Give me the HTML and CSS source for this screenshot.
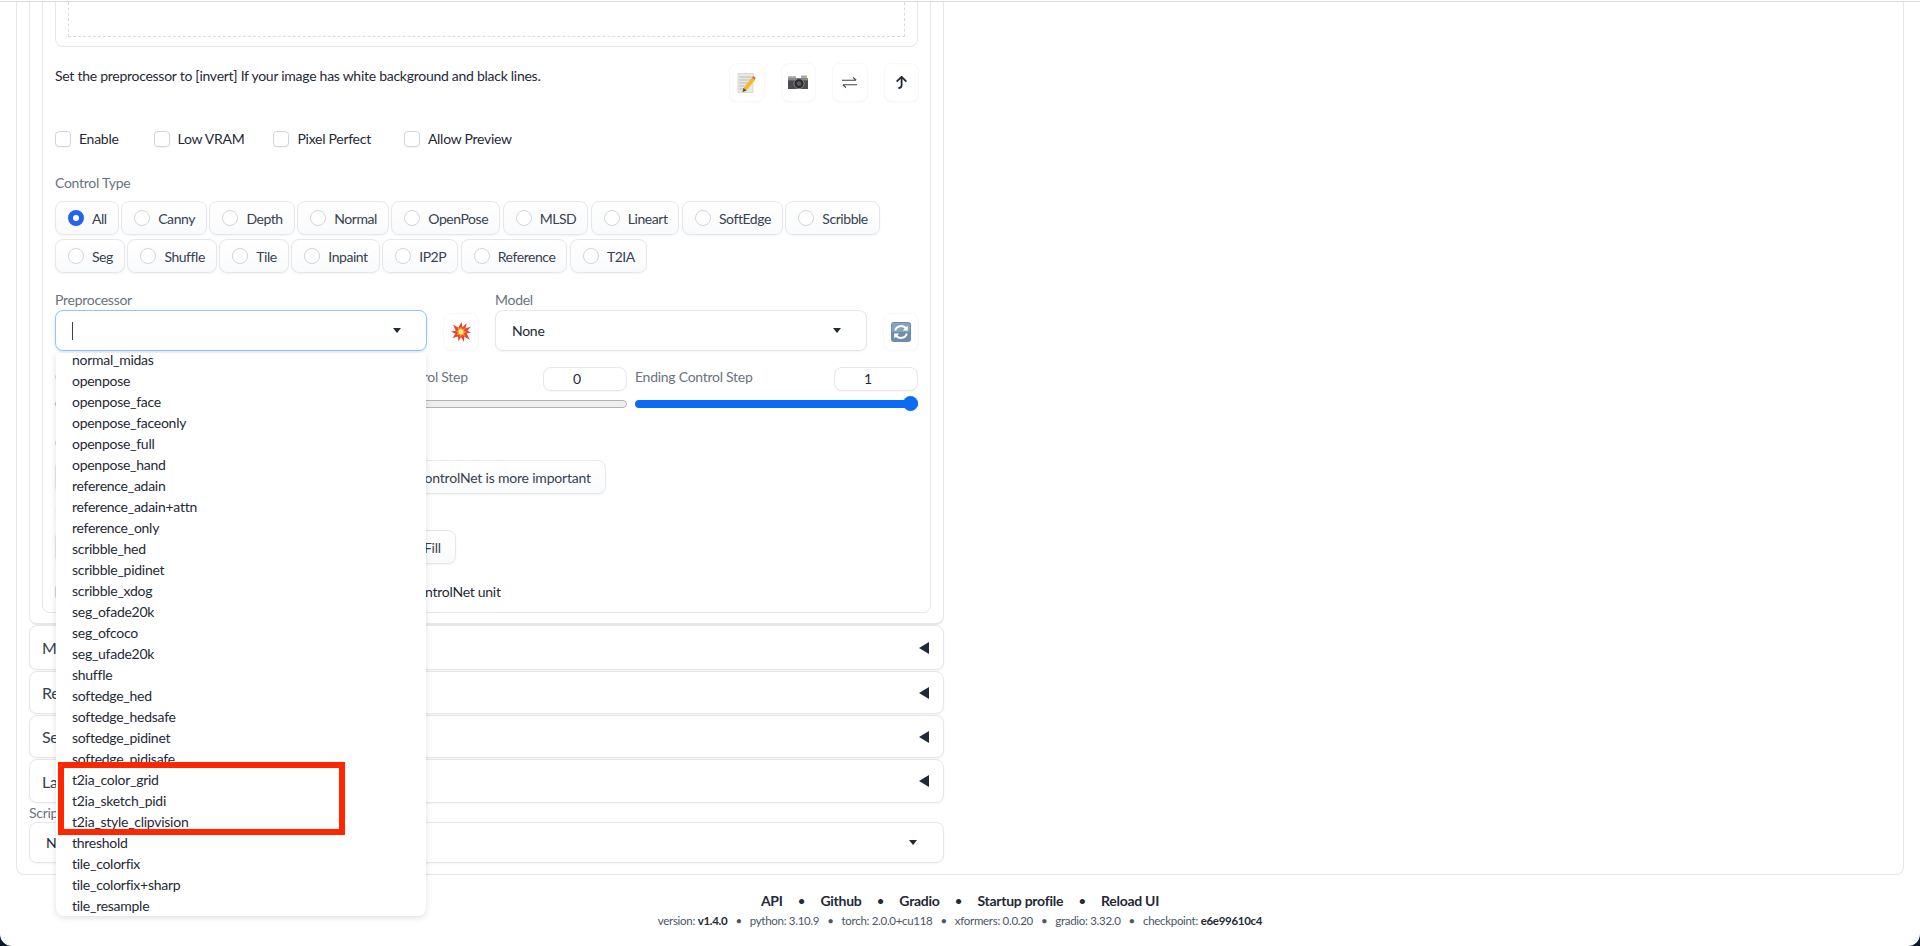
FILE: index.html
```html
<!DOCTYPE html>
<html lang="en">
<head>
<meta charset="utf-8">
<title>Stable Diffusion - ControlNet</title>
<link rel="stylesheet" href="styles.css">
</head>
<body>
<div class="window">
  <main class="panel">
    <div class="left-col">
      <section class="acc-main">
        <div class="unit">
          <div class="image-box"><div class="image-drop"></div></div>

          <div class="hint-row">
            <p class="hint">Set the preprocessor to [invert] If your image has white background and black lines.</p>
            <div class="tools">
              <button class="tool" type="button" aria-label="Memo">
                <svg class="ico-memo" viewBox="0 0 18 20"><rect x="0.5" y="0.5" width="15" height="19" fill="#e8e8e6" stroke="#c9c9c6" stroke-width="0.6"/><path d="M2 4h12M2 7h12M2 10h8M2 13h5M2 16h5" stroke="#b5b5b2" stroke-width="0.9"/><path d="M6 15 14.5 4.5 17.5 7 9 17.5 5 19Z" fill="#f5b921"/><path d="M14.5 4.5 16 3 18 4.6 17.5 7Z" fill="#e4576c"/><path d="M5 19 6 15 9 17.5Z" fill="#5b4a32"/></svg>
              </button>
              <button class="tool" type="button" aria-label="Camera">
                <svg class="ico-camera" viewBox="0 0 20 15"><path d="M0 3h20v11H0z" fill="#4c4c4e"/><path d="M0 1.2h8V3H0zM13 .5h6V3h-6z" fill="#a5a5a6"/><path d="M0 3h20v2.4H0z" fill="#8b8b8d"/><circle cx="11" cy="8.6" r="5" fill="#2a2a2c" stroke="#9a9a9c" stroke-width="0.8"/><circle cx="11" cy="8.6" r="2.4" fill="#5b5b66"/><rect x="17" y="1.4" width="2" height="1.6" fill="#d6b24a"/></svg>
              </button>
              <button class="tool" type="button" aria-label="Swap">
                <svg class="ico-swap" viewBox="0 0 15 11"><path d="M0 3.2h14M11 .5l3.2 2.7M15 7.8H1M4 10.500 .8 7.8" fill="none" stroke="#374151" stroke-width="1.1"/></svg>
              </button>
              <button class="tool" type="button" aria-label="Send up">
                <svg class="ico-up" viewBox="0 0 11 13"><path d="M5.6 2v7.2c0 1.9-1 2.8-3.2 2.8" fill="none" stroke="#1f2937" stroke-width="1.8"/><path d="M.6 5.6 5.6.8l4.8 4.8" fill="none" stroke="#1f2937" stroke-width="1.8"/></svg>
              </button>
            </div>
          </div>

          <div class="checks">
            <label class="check"><span class="box"></span>Enable</label>
            <label class="check"><span class="box"></span>Low VRAM</label>
            <label class="check"><span class="box"></span>Pixel Perfect</label>
            <label class="check"><span class="box"></span>Allow Preview</label>
          </div>

          <div class="label label-type">Control Type</div>
          <div class="radios">
            <span class="radio"><i class="dot on"></i>All</span>
            <span class="radio"><i class="dot"></i>Canny</span>
            <span class="radio"><i class="dot"></i>Depth</span>
            <span class="radio"><i class="dot"></i>Normal</span>
            <span class="radio"><i class="dot"></i>OpenPose</span>
            <span class="radio"><i class="dot"></i>MLSD</span>
            <span class="radio"><i class="dot"></i>Lineart</span>
            <span class="radio"><i class="dot"></i>SoftEdge</span>
            <span class="radio"><i class="dot"></i>Scribble</span>
            <span class="radio"><i class="dot"></i>Seg</span>
            <span class="radio"><i class="dot"></i>Shuffle</span>
            <span class="radio"><i class="dot"></i>Tile</span>
            <span class="radio"><i class="dot"></i>Inpaint</span>
            <span class="radio"><i class="dot"></i>IP2P</span>
            <span class="radio"><i class="dot"></i>Reference</span>
            <span class="radio"><i class="dot"></i>T2IA</span>
          </div>

          <div class="selectors">
            <div class="sel-col">
              <div class="label">Preprocessor</div>
              <div class="sel-row">
                <div class="select-wrap">
                  <div class="select focused"><span class="caret"></span><svg class="tri" viewBox="0 0 8 5"><path d="M0 0h8L4 5z"/></svg></div>
                  <div class="menu">
                    <ul class="menu-list">
                      <li>normal_midas</li><li>openpose</li><li>openpose_face</li><li>openpose_faceonly</li><li>openpose_full</li><li>openpose_hand</li><li>reference_adain</li><li>reference_adain+attn</li><li>reference_only</li><li>scribble_hed</li><li>scribble_pidinet</li><li>scribble_xdog</li><li>seg_ofade20k</li><li>seg_ofcoco</li><li>seg_ufade20k</li><li>shuffle</li><li>softedge_hed</li><li>softedge_hedsafe</li><li>softedge_pidinet</li><li>softedge_pidisafe</li><li>t2ia_color_grid</li><li>t2ia_sketch_pidi</li><li>t2ia_style_clipvision</li><li>threshold</li><li>tile_colorfix</li><li>tile_colorfix+sharp</li><li>tile_resample</li>
                    </ul>
                    <div class="redbox"></div>
                  </div>
                </div>
                <button class="tool side" type="button" aria-label="Run preprocessor">
                  <svg class="ico-boom" viewBox="0 0 20 20"><path d="M10.500 0l1 5.500L15.500 1l-1 5.500L20 4.500l-3.600 4.200 3.600 1.800-4.400 1 3.400 6.500-5.800-3.600L13 20l-3-5-2.500 4.500-.5-5L1.500 16l3-4.200L0 9.500l4.800-.8L2 2.500l5.400 3.200z" fill="#e8412c"/><path d="M10 4.500l1.200 2.700 2.600-1-.8 2.800 2.700 1-2.700 1.200 1 2.800-3-1.200-1.500 2.500-.8-2.800-2.800.7 1.100-2.600-2.400-1.500 2.700-.7-.7-2.800 2.500 1.200z" fill="#f9a825"/><circle cx="10" cy="10" r="2.400" fill="#ffe98a"/></svg>
                </button>
              </div>
            </div>
            <div class="sel-col">
              <div class="label">Model</div>
              <div class="sel-row">
                <div class="select-wrap">
                  <div class="select"><span class="sel-value">None</span><svg class="tri" viewBox="0 0 8 5"><path d="M0 0h8L4 5z"/></svg></div>
                </div>
                <button class="tool side" type="button" aria-label="Refresh">
                  <svg class="ico-refresh" viewBox="0 0 20 20"><rect width="20" height="20" rx="3" fill="#6f8daa"/><rect x="1" y="1" width="18" height="9" rx="2" fill="#86a3bd"/><path d="M4.200 8.500A6 6 0 0 1 15 6.800" fill="none" stroke="#fff" stroke-width="2"/><path d="M16.800 3.500v5h-5z" fill="#fff"/><path d="M15.800 11.500A6 6 0 0 1 5 13.200" fill="none" stroke="#fff" stroke-width="2"/><path d="M3.200 16.500v-5h5z" fill="#fff"/></svg>
                </button>
              </div>
            </div>
          </div>

          <div class="sliders">
            <div class="slider-col">
              <div class="slider-head"><span class="label">Control Weight</span><span class="num">1</span></div>
              <input class="range" type="range" min="0" max="2" step="0.05" value="1">
            </div>
            <div class="slider-col">
              <div class="slider-head"><span class="label">Starting Control Step</span><span class="num">0</span></div>
              <input class="range" type="range" min="0" max="1" step="0.01" value="0">
            </div>
            <div class="slider-col">
              <div class="slider-head"><span class="label">Ending Control Step</span><span class="num">1</span></div>
              <input class="range range-full" type="range" min="0" max="1" step="0.01" value="1">
            </div>
          </div>

          <div class="label label-mode">Control Mode</div>
          <div class="radios radios-tail">
            <span class="radio"><i class="dot on"></i>Balanced</span>
            <span class="radio"><i class="dot"></i>My prompt is more important</span>
            <span class="radio"><i class="dot"></i>ControlNet is more important</span>
          </div>

          <div class="label label-resize">Resize Mode</div>
          <div class="radios radios-tail radios-resize">
            <span class="radio"><i class="dot"></i>Just Resize</span>
            <span class="radio"><i class="dot on"></i>Crop and Resize</span>
            <span class="radio"><i class="dot"></i>Resize and Fill</span>
          </div>

          <label class="check loopback"><span class="box"></span>[Loopback] Automatically send generated images to this ControlNet unit</label>
        </div>
      </section>

      <div class="acc-rows">
        <div class="acc-row"><span>Multi</span><svg class="arrow" viewBox="0 0 10 12"><path d="M10 0v12L0 6z"/></svg></div>
        <div class="acc-row"><span>Refiner</span><svg class="arrow" viewBox="0 0 10 12"><path d="M10 0v12L0 6z"/></svg></div>
        <div class="acc-row"><span>Seed</span><svg class="arrow" viewBox="0 0 10 12"><path d="M10 0v12L0 6z"/></svg></div>
        <div class="acc-row"><span>Layer</span><svg class="arrow" viewBox="0 0 10 12"><path d="M10 0v12L0 6z"/></svg></div>
      </div>

      <div class="label label-script">Script</div>
      <div class="select script"><span class="sel-value">None</span><svg class="tri" viewBox="0 0 8 5"><path d="M0 0h8L4 5z"/></svg></div>
    </div>
  </main>

  <footer class="footer">
    <div class="links"><a>API</a><b>•</b><a>Github</a><b>•</b><a>Gradio</a><b>•</b><a>Startup profile</a><b>•</b><a>Reload UI</a></div>
    <div class="versions"><span>version: <strong>v1.4.0</strong></span><b>•</b><span>python: 3.10.9</span><b>•</b><span>torch: 2.0.0+cu118</span><b>•</b><span>xformers: 0.0.20</span><b>•</b><span>gradio: 3.32.0</span><b>•</b><span>checkpoint: <strong>e6e99610c4</strong></span></div>
  </footer>
</div>
</body>
</html>
```

FILE: styles.css
```css
* { box-sizing: border-box; }
html, body { margin: 0; padding: 0; height: 946px; overflow: hidden; background: #0c1a2b; }
body { font-family: Lato, "Liberation Sans", sans-serif; font-size: 14px; letter-spacing: -0.27px; color: #1f2937; }
.window { height: 946px; background: #fff; border-radius: 0 0 12px 12px; padding-top: 1px; overflow: hidden; }

.panel { margin: 0; padding: 0 16px; border-top: 1px solid #dcdcdc; height: 874px; }
.left-col { width: 100%; height: 100%; border: 1px solid #e5e7eb; border-top: 0; border-radius: 0 0 8px 8px; padding: 0 959px 0 12px; }
.acc-main { height: 623px; border: 1px solid #e5e7eb; border-top: 0; border-bottom-width: 2px; border-radius: 0 0 8px 8px; padding: 0 12px; }
.unit { height: 611px; border: 1px solid #e5e7eb; border-top: 0; border-radius: 0 0 8px 8px; padding: 0 12px; }

.image-box { height: 45px; border: 1px solid #e5e7eb; border-top: 0; border-radius: 0 0 8px 8px; padding: 0 12px 9px; }
.image-drop { height: 100%; border: 1px dashed #d8dbe0; border-top: 0; }

.hint-row { display: flex; justify-content: space-between; align-items: flex-start; margin-top: 16px; height: 39px; }
.hint { margin: 4px 0 0; line-height: 18px; }
.tools { display: flex; gap: 16px; margin-right: -1px; }
.tool { width: 35.5px; height: 39px; padding: 0; background: #fff; border: 1px solid #f8f8f9; border-radius: 8px; box-shadow: 0 1px 2px rgba(0,0,0,.02); display: flex; align-items: center; justify-content: center; flex: none; }
.ico-memo { width: 19px; height: 20px; }
.ico-camera { width: 20px; height: 15px; }
.ico-swap { width: 15px; height: 11px; }
.ico-up { width: 11px; height: 13px; }
.ico-boom { width: 20px; height: 20px; }
.ico-refresh { width: 20px; height: 20px; }

.checks { display: flex; margin-top: 29px; height: 16px; }
.check { display: flex; align-items: center; line-height: 16px; margin-right: 35px; }
.check:nth-child(2) { margin-right: 29px; }
.check:nth-child(3) { margin-right: 33px; }
.box { width: 16px; height: 16px; border: 1px solid #d1d5db; border-radius: 4px; background: #fff; margin-right: 8px; flex: none; box-shadow: 0 1px 1px rgba(0,0,0,.04); }

.label { color: #6b7280; line-height: 18px; }
.label-type { margin-top: 27px; margin-bottom: 9px; }
.radios { display: flex; flex-wrap: wrap; gap: 4px 2.5px; width: 840px; }
.radio { display: flex; align-items: center; height: 34px; padding: 0 11px 0 12px; border: 1px solid #e5e7eb; border-radius: 8px; background: linear-gradient(#fff, #f9fafb); box-shadow: 0 1px 2px rgba(0,0,0,.05); white-space: nowrap; color: #374151; letter-spacing: -0.45px; }
.dot { width: 16px; height: 16px; border-radius: 50%; border: 1px solid #d1d5db; background: #fff; margin-right: 8px; flex: none; }
.dot.on { border: 5px solid #2563eb; }

.selectors { display: grid; grid-template-columns: 423px 423px; gap: 17px; margin-top: 18px; }
.sel-row { display: flex; margin-top: 1px; }
.select-wrap { position: relative; width: 372px; flex: none; }
.select { height: 41px; display: flex; align-items: center; justify-content: space-between; padding: 0 25px 0 16px; background: #fff; border: 1px solid #e5e7eb; border-radius: 8px; box-shadow: 0 1px 2px rgba(0,0,0,.05); }
.select.focused { border-color: #93c5fd; box-shadow: 0 1px 3px rgba(59,130,246,.25); padding-left: 16px; }
.caret { width: 1px; height: 18px; background: #374151; }
.sel-value { color: #1f2937; }
.tri { width: 8px; height: 5px; fill: #1f2937; }
.side { margin: 3px 0 0 16px; height: 38px; }

.menu { position: absolute; left: 1px; top: 43px; width: 370px; height: 563px; background: #fff; border-radius: 0 0 8px 8px; box-shadow: 0 2px 6px rgba(0,0,0,.12); z-index: 5; }
.menu-list { list-style: none; margin: 0; padding: 0; height: 100%; overflow: hidden; }
.menu-list li { height: 21px; line-height: 21px; padding-left: 16px; white-space: nowrap; color: #1f2937; position: relative; top: -4.5px; }
.redbox { position: absolute; left: 2px; top: 409px; width: 287px; height: 73px; border: 6px solid #ff2600; }

.sliders { display: grid; grid-template-columns: 282px 282px 283px; gap: 8px; margin-top: 16px; height: 43px; }
.slider-head { display: flex; justify-content: space-between; align-items: flex-start; height: 24px; }
.slider-head .label { margin-top: 1px; }
.num { width: 84px; height: 24px; border: 1px solid #e5e7eb; border-radius: 8px; padding-right: 16px; text-align: center; line-height: 22px; background: #fff; box-shadow: 0 1px 1px rgba(0,0,0,.03); }
.range { -webkit-appearance: none; appearance: none; display: block; width: 100%; height: 15px; margin: 5px 0 0; background: transparent; }
.range::-webkit-slider-runnable-track { height: 8px; border-radius: 4px; background: #efefef; border: 1px solid #b2b2b2; }
.range::-webkit-slider-thumb { -webkit-appearance: none; width: 15px; height: 15px; border-radius: 50%; background: #0a6cf5; margin-top: -4.5px; }
.range-full::-webkit-slider-runnable-track { background: #0a6cf5; border: 0; }
.range-full::-webkit-slider-thumb { margin-top: -3.5px; }

.label-mode { margin-top: 24px; margin-bottom: 8px; }
.label-resize { margin-top: 10px; margin-bottom: 8px; }
.radios-tail { flex-wrap: nowrap; }
.radios-tail .radio:last-child { letter-spacing: -0.2px; padding-right: 14px; }
.radios-resize { column-gap: 7px; }
.loopback { margin-top: 20px; margin-right: 0; }

.acc-rows { display: flex; flex-direction: column; gap: 1px; }
.acc-row { height: 43px; display: flex; align-items: center; justify-content: space-between; padding: 0 14px 0 12px; border: 1px solid #e5e7eb; border-radius: 8px; background: #fff; box-shadow: 0 1px 2px rgba(0,0,0,.05); font-size: 16px; color: #374151; }
.acc-row:first-child { height: 45px; }
.acc-row:last-child { height: 44px; }
.arrow { width: 10px; height: 12px; fill: #1f2937; }
.label-script { margin-top: 1px; }
.script { padding: 0 26px 0 16px; }

.footer { text-align: center; padding-top: 17px; }
.links { display: flex; justify-content: center; line-height: 18px; font-weight: 700; color: #1f2937; font-size: 14px; }
.links b { font-weight: 400; margin: 0 15px; }
.versions { display: flex; justify-content: center; margin-top: 3px; line-height: 16px; font-size: 11.5px; letter-spacing: -0.3px; color: #4b5563; }
.versions b { font-weight: 400; margin: 0 8px; }
.versions strong { color: #1f2937; }
```
